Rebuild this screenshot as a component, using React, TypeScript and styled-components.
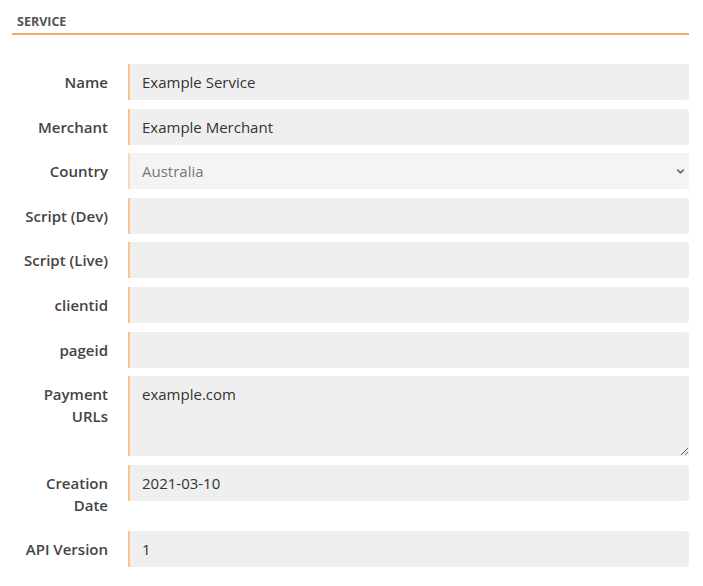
import styled, { createGlobalStyle } from "styled-components";
import { ChevronDown } from "lucide-react";

const GlobalStyle = createGlobalStyle`
    body{
        margin:0;
        background:#fff;
        font-family:"Open Sans", "Noto Sans", sans-serif;
    }
`;

const Section = styled.section`
    padding:0 14px 0 12px;
`;

const Heading = styled.h2`
    margin:0;
    padding:14px 5px 3px;
    font-size:12.5px;
    line-height:16px;
    font-weight:700;
    text-transform:uppercase;
    color:#555;
    border-bottom:2px solid #f4a96b;
`;

const Form = styled.form`
    display:flex;
    flex-direction:column;
    gap:8.6px;
    margin-top:29px;
`;

const Row = styled.div`
    display:grid;
    grid-template-columns:96px 1fr;
    column-gap:20px;
    align-items:start;
`;

const Label = styled.label`
    padding:7px 0;
    font-size:15px;
    line-height:22px;
    font-weight:600;
    color:#444;
    text-align:right;
`;

const fieldBase = `
    display:block;
    width:100%;
    box-sizing:border-box;
    margin:0;
    border:none;
    border-left:2px solid #f7c594;
    border-radius:0 3px 3px 0;
    font-family:"Open Sans", "Noto Sans", sans-serif;
    font-size:15px;
    color:#333;
    outline:none;
`;

const Input = styled.input`
    ${fieldBase}
    height:36px;
    padding:0 12px;
    background:#efefef;
`;

const TextArea = styled.textarea`
    ${fieldBase}
    height:80px;
    padding:7px 12px;
    line-height:22px;
    background:#efefef;
    resize:vertical;
`;

const SelectWrap = styled.div`
    position:relative;

    svg{
        position:absolute;
        right:3px;
        top:13px;
        color:#666;
        pointer-events:none;
    }
`;

const Select = styled.select`
    ${fieldBase}
    appearance:none;
    height:36px;
    padding:0 12px;
    background:#f4f4f4;
    color:#777;
    border-left-color:#fad9b8;
`;

interface FieldProps {
    label : string
    value? : string
}

function TextRow({label, value = ""} : FieldProps){
    return (
        <Row>
            <Label>{label}</Label>
            <Input type="text" defaultValue={value} />
        </Row>
    )
}

export default function App(){
    return (
        <Section>
            <GlobalStyle />
            <Heading>Service</Heading>
            <Form>
                <TextRow label="Name" value="Example Service" />
                <TextRow label="Merchant" value="Example Merchant" />
                <Row>
                    <Label>Country</Label>
                    <SelectWrap>
                        <Select defaultValue="AU">
                            <option value="AU">Australia</option>
                        </Select>
                        <ChevronDown size={11} strokeWidth={3.5} />
                    </SelectWrap>
                </Row>
                <TextRow label="Script (Dev)" />
                <TextRow label="Script (Live)" />
                <TextRow label="clientid" />
                <TextRow label="pageid" />
                <Row>
                    <Label>Payment URLs</Label>
                    <TextArea defaultValue="example.com" />
                </Row>
                <TextRow label="Creation Date" value="2021-03-10" />
                <TextRow label="API Version" value="1" />
            </Form>
        </Section>
    )
}
